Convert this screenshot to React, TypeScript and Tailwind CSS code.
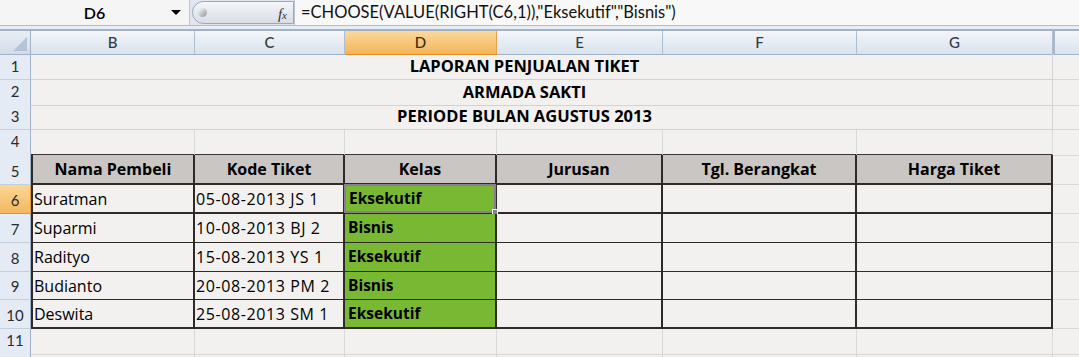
import React from "react";

const letters = ["B", "C", "D", "E", "F", "G"];

const rowHeights: Record<number, number> = {
  1: 26, 2: 24, 3: 26, 4: 25, 5: 30, 6: 29, 7: 29, 8: 29, 9: 28, 10: 29, 11: 25,
};

const data = [
  { nama: "Suratman", kode: "05-08-2013 JS 1", kelas: "Eksekutif" },
  { nama: "Suparmi", kode: "10-08-2013 BJ 2", kelas: "Bisnis" },
  { nama: "Radityo", kode: "15-08-2013 YS 1", kelas: "Eksekutif" },
  { nama: "Budianto", kode: "20-08-2013 PM 2", kelas: "Bisnis" },
  { nama: "Deswita", kode: "25-08-2013 SM 1", kelas: "Eksekutif" },
];

const headers = ["Nama Pembeli", "Kode Tiket", "Kelas", "Jurusan", "Tgl. Berangkat", "Harga Tiket"];

const gridTemplate = "grid grid-cols-[31px_164px_150px_152px_166px_194px_196px_1fr]";

function RowHeader({ n, active }: { n: number; active?: boolean }) {
  return (
    <div
      className={
        "flex items-end justify-center pb-[2px] font-['Lato',sans-serif] text-[15px] text-[#2b2b2b] border-r border-b " +
        (active
          ? "bg-gradient-to-b from-[#fbd894] to-[#f3b860] border-r-[#e39a3a] border-b-[#c89a5a]"
          : "bg-[#e4ebf5] border-r-[#9fb2c7] border-b-[#c4cfdc]")
      }
    >
      {n}
    </div>
  );
}

function PlainCell({ last }: { last?: boolean }) {
  return <div className={"border-b border-[#d7d9db] " + (last ? "" : "border-r")} />;
}

export default function App() {
  return (
    <div className="w-[1079px] h-[357px] overflow-hidden bg-[#f2f1ef] font-['Open_Sans','Lato',sans-serif] text-black">
      {/* formula bar */}
      <div className="flex h-[26px] bg-[#dfe6ef] border-b border-[#aebdd0] font-['Lato',sans-serif]">
        <div className="relative w-[190px] flex items-center justify-center bg-[#f5f5f5] border-r border-[#b9c5d3] text-[16px] font-semibold">
          D6
          <span className="absolute right-[8px] top-[10px] w-0 h-0 border-l-[5px] border-r-[5px] border-t-[5px] border-l-transparent border-r-transparent border-t-black" />
        </div>
        <div className="relative w-[102px] my-[1px] ml-[2px] flex items-center rounded-l-full bg-gradient-to-b from-[#f4f6f8] to-[#d9dee5] border border-[#9aa8b8]">
          <span className="ml-[5px] w-[9px] h-[9px] rounded-full bg-gradient-to-br from-[#ffffff] to-[#8c949c]" />
          <span className="absolute right-[6px] top-[1px] font-['Liberation_Serif',serif] italic text-[15px] text-[#333]">
            f<span className="text-[11px]">x</span>
          </span>
        </div>
        <div className="flex-1 flex items-center pl-[6px] bg-[#f8f8f8] border-l border-[#b9c5d3] text-[16.5px] text-[#111]">
          =CHOOSE(VALUE(RIGHT(C6,1)),"Eksekutif","Bisnis")
        </div>
      </div>
      <div className="h-[5px] bg-[#e9eef4] border-b-2 border-[#9fb2c7]" />

      {/* column headers */}
      <div className={gridTemplate + " h-[23px] font-['Lato',sans-serif]"}>
        <div className="relative bg-gradient-to-b from-[#e9eef5] to-[#d3dce8] border-r border-b border-[#9fb2c7]">
          <svg className="absolute right-[3px] bottom-[3px]" width="14" height="14" viewBox="0 0 14 14">
            <polygon points="14,0 14,14 0,14" fill="#b4c3d6" />
          </svg>
        </div>
        {letters.map((l) => (
          <div
            key={l}
            className={
              "flex items-center justify-center text-[15px] font-medium border-r border-b " +
              (l === "D"
                ? "bg-gradient-to-b from-[#fbd99a] to-[#f2b45a] border-r-[#e4a24a] border-b-[#e38d1e] text-[#3a2a10]"
                : "bg-gradient-to-b from-[#f3f6fa] to-[#dae2ec] border-r-[#aebdd0] border-b-[#9fb2c7] text-[#2e3a48]")
            }
          >
            {l}
          </div>
        ))}
        <div className="bg-gradient-to-b from-[#f3f6fa] to-[#dae2ec] border-b border-[#9fb2c7] border-l-2 border-l-[#a9b7c8]" />
      </div>

      {/* title rows */}
      {["LAPORAN PENJUALAN TIKET", "ARMADA SAKTI", "PERIODE BULAN AGUSTUS 2013"].map((t, i) => (
        <div key={t} className={gridTemplate} style={{ height: rowHeights[i + 1] }}>
          <RowHeader n={i + 1} />
          <div className="col-span-6 flex items-center justify-center pr-[34px] text-[16.5px] font-bold border-r border-b border-[#d0d3d6]">
            {t}
          </div>
          <PlainCell last />
        </div>
      ))}

      {/* row 4 */}
      <div className={gridTemplate} style={{ height: rowHeights[4] }}>
        <RowHeader n={4} />
        {letters.map((l) => (
          <div key={l} className="border-r border-[#d7d9db] border-b-2 border-b-[#3a3533]" />
        ))}
        <PlainCell last />
      </div>

      {/* row 5 header */}
      <div className={gridTemplate} style={{ height: rowHeights[5] }}>
        <RowHeader n={5} />
        {headers.map((h, i) => (
          <div
            key={h}
            className={
              "flex items-center justify-center bg-[#cac6c3] text-[16px] font-bold border-r-2 border-b-2 border-[#2f2a28] " +
              (i === 0 ? "border-l-2" : "")
            }
          >
            {h}
          </div>
        ))}
        <PlainCell last />
      </div>

      {/* data rows */}
      {data.map((r, i) => {
        const n = i + 6;
        const bottom = i === 0 || i === data.length - 1 ? "border-b-2" : "border-b";
        return (
          <div key={n} className={gridTemplate} style={{ height: rowHeights[n] }}>
            <RowHeader n={n} active={n === 6} />
            <div className={"flex items-center pl-[1px] text-[16px] border-l-2 border-r-2 border-[#2f2a28] " + bottom}>
              {r.nama}
            </div>
            <div className={"flex items-center pl-[1px] text-[16px] tracking-[0.6px] border-r-2 border-[#2f2a28] " + bottom}>
              {r.kode}
            </div>
            <div className={"relative flex items-center bg-[#79b833] text-[15.5px] font-bold border-r-2 border-[#2f2a28] " + bottom}>
              {n === 6 ? (
                <div className="absolute inset-[-1px] flex items-center pl-[3px] border-2 border-[#8a7d92]">
                  {r.kelas}
                  <span className="absolute right-[-4px] bottom-[-4px] w-[6px] h-[6px] bg-[#8a7d92] border border-white" />
                </div>
              ) : (
                <span className="pl-[3px]">{r.kelas}</span>
              )}
            </div>
            <div className={"border-r-2 border-[#2f2a28] " + bottom} />
            <div className={"border-r-2 border-[#2f2a28] " + bottom} />
            <div className={"border-r-2 border-[#2f2a28] " + bottom} />
            <PlainCell last />
          </div>
        );
      })}

      {/* row 11 */}
      <div className={gridTemplate} style={{ height: rowHeights[11] }}>
        <RowHeader n={11} />
        {letters.map((l) => (
          <PlainCell key={l} />
        ))}
        <PlainCell last />
      </div>
      <div className={gridTemplate + " h-[10px]"}>
        <div className="bg-[#e4ebf5] border-r border-[#9fb2c7]" />
        {letters.map((l) => (
          <div key={l} className="border-r border-[#d7d9db]" />
        ))}
        <div />
      </div>
    </div>
  );
}
